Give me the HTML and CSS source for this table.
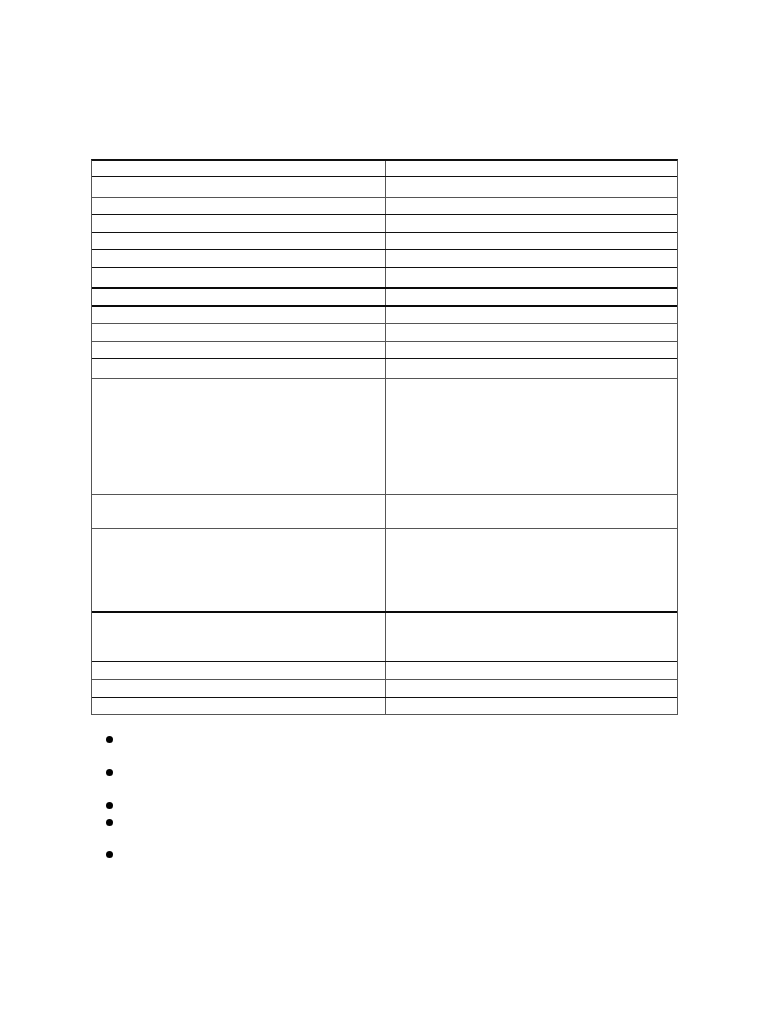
FILE: index.html
```html
<!DOCTYPE html>
<html lang="en">
<head>
<meta charset="utf-8">
<title>Table</title>
<link rel="stylesheet" href="styles.css">
</head>
<body>
<div class="page">
  <div class="grid-table">
    <div class="row h16 dark"><div class="cell"></div><div class="cell"></div></div>
    <div class="row h21 gray"><div class="cell"></div><div class="cell"></div></div>
    <div class="row h17 dark"><div class="cell"></div><div class="cell"></div></div>
    <div class="row h18 dark"><div class="cell"></div><div class="cell"></div></div>
    <div class="row h17 dark"><div class="cell"></div><div class="cell"></div></div>
    <div class="row h18 dark"><div class="cell"></div><div class="cell"></div></div>
    <div class="row h21 thick"><div class="cell"></div><div class="cell"></div></div>
    <div class="row h18 thick"><div class="cell"></div><div class="cell"></div></div>
    <div class="row h17 gray"><div class="cell"></div><div class="cell"></div></div>
    <div class="row h18 gray"><div class="cell"></div><div class="cell"></div></div>
    <div class="row h17 dark"><div class="cell"></div><div class="cell"></div></div>
    <div class="row h20 gray"><div class="cell"></div><div class="cell"></div></div>
    <div class="row h116 gray"><div class="cell"></div><div class="cell"></div></div>
    <div class="row h34 gray"><div class="cell"></div><div class="cell"></div></div>
    <div class="row h84 thick"><div class="cell"></div><div class="cell"></div></div>
    <div class="row h49 dark"><div class="cell"></div><div class="cell"></div></div>
    <div class="row h18 gray"><div class="cell"></div><div class="cell"></div></div>
    <div class="row h18 dark"><div class="cell"></div><div class="cell"></div></div>
    <div class="row h17 gray"><div class="cell"></div><div class="cell"></div></div>
  </div>
  <ul class="bullets">
    <li class="item two"></li>
    <li class="item two"></li>
    <li class="item one"></li>
    <li class="item two-short"></li>
    <li class="item one"></li>
  </ul>
</div>
</body>
</html>
```
FILE: styles.css
```css
html, body {
  margin: 0;
  padding: 0;
  background: #ffffff;
  font-family: "Liberation Sans", Arial, sans-serif;
}

.page {
  padding-top: 159px;
}

.grid-table {
  margin-left: 91px;
  width: 587px;
  box-sizing: border-box;
  border-top: 2px solid #111111;
  border-left: 1px solid #555555;
  border-right: 1px solid #555555;
}

.row {
  display: grid;
  grid-template-columns: 294px 1fr;
  box-sizing: border-box;
  border-bottom: 1px solid #555555;
}

.row.dark { border-bottom: 1px solid #111111; }
.row.gray { border-bottom: 1px solid #555555; }
.row.thick { border-bottom: 2px solid #0a0a0a; }

.cell:first-child {
  border-right: 1px solid #555555;
}

.h16 { height: 16px; }
.h17 { height: 17px; }
.h18 { height: 18px; }
.h20 { height: 20px; }
.h21 { height: 21px; }
.h34 { height: 34px; }
.h49 { height: 49px; }
.h84 { height: 84px; }
.h116 { height: 116px; }

.bullets {
  list-style: none;
  margin: 16px 0 0 106px;
  padding: 0;
}

.item {
  display: flex;
  align-items: flex-start;
}

.item::before {
  content: "";
  width: 7px;
  height: 7px;
  margin-top: 5px;
  border-radius: 50%;
  background: #000000;
}

.item.two { height: 33px; }
.item.one { height: 17px; }
.item.two-short { height: 32px; }
```
